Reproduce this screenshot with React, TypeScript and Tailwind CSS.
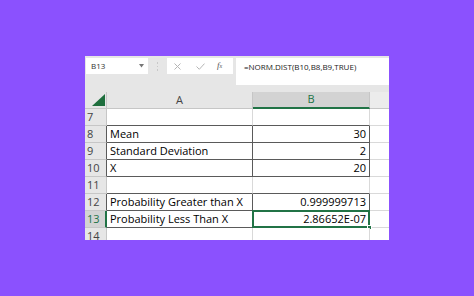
import React from "react"

type Row = { n: number; a: string; b: string; boxed: boolean }

const rows: Row[] = [
  { n: 7, a: "", b: "", boxed: false },
  { n: 8, a: "Mean", b: "30", boxed: true },
  { n: 9, a: "Standard Deviation", b: "2", boxed: true },
  { n: 10, a: "X", b: "20", boxed: true },
  { n: 11, a: "", b: "", boxed: false },
  { n: 12, a: "Probability Greater than X", b: "0.999999713", boxed: true },
  { n: 13, a: "Probability Less Than X", b: "2.86652E-07", boxed: true },
  { n: 14, a: "", b: "", boxed: false },
]

const cellFont = { fontFamily: '"Open Sans", "Noto Sans", sans-serif' }

function FormulaBar() {
  return (
    <div className="flex items-start pt-[2px]" style={cellFont}>
      <div className="ml-[1px] flex h-[16px] w-[62px] items-center justify-between bg-white pl-[5px] pr-[4px] text-[8px] text-[#333]">
        <span>B13</span>
        <svg width="5" height="4" viewBox="0 0 5 4">
          <path d="M0 0h5L2.5 3.5z" fill="#777" />
        </svg>
      </div>
      <div className="ml-[8px] mt-[4px] flex w-[3px] flex-col items-center gap-[2px]">
        <span className="h-[1.5px] w-[1.5px] bg-[#c8c8c8]" />
        <span className="h-[1.5px] w-[1.5px] bg-[#c8c8c8]" />
        <span className="h-[1.5px] w-[1.5px] bg-[#c8c8c8]" />
      </div>
      <div className="ml-[8px] flex h-[16px] w-[66px] items-center bg-white">
        <svg className="ml-[7px]" width="7" height="7" viewBox="0 0 7 7">
          <path d="M0.5 0.5l6 6M6.5 0.5l-6 6" stroke="#b5b5b5" strokeWidth="1" />
        </svg>
        <svg className="ml-[15px]" width="9" height="7" viewBox="0 0 9 7">
          <path d="M0.5 3.5l2.8 2.8L8.5 0.6" stroke="#b5b5b5" strokeWidth="1" fill="none" />
        </svg>
        <span className="ml-[12px] text-[9px] italic text-[#555]" style={{ fontFamily: '"Liberation Serif", serif' }}>
          f<span className="text-[6px]">x</span>
        </span>
      </div>
      <div className="ml-[3px] h-[27px] flex-1 bg-white pl-[8px] pt-[1px] text-[8px] leading-[16px] text-[#222]">
        =NORM.DIST(B10,B8,B9,TRUE)
      </div>
    </div>
  )
}

function Sheet() {
  return (
    <div className="mt-[7px] grid grid-cols-[22px_146px_117px_19px] auto-rows-[17px]" style={cellFont}>
      <div className="flex items-end justify-end border-r border-b border-[#c6c6c6] bg-[#e6e6e6] pb-[2px] pr-[1px]">
        <svg width="13" height="12" viewBox="0 0 13 12">
          <path d="M13 0V12H0z" fill="#1e6e3d" />
        </svg>
      </div>
      <div className="flex items-center justify-center border-r border-b border-[#c6c6c6] bg-[#e6e6e6] text-[11px] text-[#444]">
        A
      </div>
      <div className="flex items-center justify-center border-r border-b-2 border-r-[#c6c6c6] border-b-[#217346] bg-[#d3d3d3] text-[11px] text-[#217346]">
        B
      </div>
      <div className="border-b border-[#c6c6c6] bg-[#ececec]" />

      {rows.map((r, i) => {
        const next = rows[i + 1]
        const darkBottom = r.boxed || (next ? next.boxed : false)
        const selected = r.n === 13
        return (
          <React.Fragment key={r.n}>
            <div
              className={
                "flex items-center border-b pl-[2px] text-[11px] " +
                (selected
                  ? "border-r-2 border-r-[#217346] border-b-[#c6c6c6] bg-[#d3d3d3] text-[#217346]"
                  : r.boxed
                    ? "border-r border-r-[#5a5a5a] border-b-[#c6c6c6] bg-[#e6e6e6] text-[#444]"
                    : "border-r border-r-[#c6c6c6] border-b-[#c6c6c6] bg-[#e6e6e6] text-[#444]")
              }
            >
              {r.n}
            </div>
            <div
              className={
                "flex items-center overflow-hidden whitespace-nowrap border-r border-b bg-white pl-[3px] text-[11px] text-black " +
                (r.boxed ? "border-r-[#5a5a5a] " : "border-r-[#d9d9d9] ") +
                (darkBottom ? "border-b-[#5a5a5a]" : "border-b-[#d9d9d9]")
              }
            >
              {r.a}
            </div>
            <div
              className={
                "relative flex items-center justify-end whitespace-nowrap border-r border-b bg-white pr-[3px] text-[11px] text-black " +
                (r.boxed ? "border-r-[#5a5a5a] " : "border-r-[#d9d9d9] ") +
                (darkBottom ? "border-b-[#5a5a5a]" : "border-b-[#d9d9d9]")
              }
            >
              {r.b}
              {selected && (
                <>
                  <div className="pointer-events-none absolute -top-px -left-px -right-px -bottom-px border-2 border-[#217346]" />
                  <div className="absolute -right-[3px] -bottom-[3px] h-[5px] w-[5px] border border-white bg-[#217346]" />
                </>
              )}
            </div>
            <div className="border-b border-[#d9d9d9] bg-white" />
          </React.Fragment>
        )
      })}
    </div>
  )
}

export default function App() {
  return (
    <div className="h-[296px] w-[474px] bg-[#8b51fe] pl-[85px] pt-[56px]">
      <div className="h-[184px] w-[304px] overflow-hidden bg-[#e6e6e6]">
        <FormulaBar />
        <Sheet />
      </div>
    </div>
  )
}
